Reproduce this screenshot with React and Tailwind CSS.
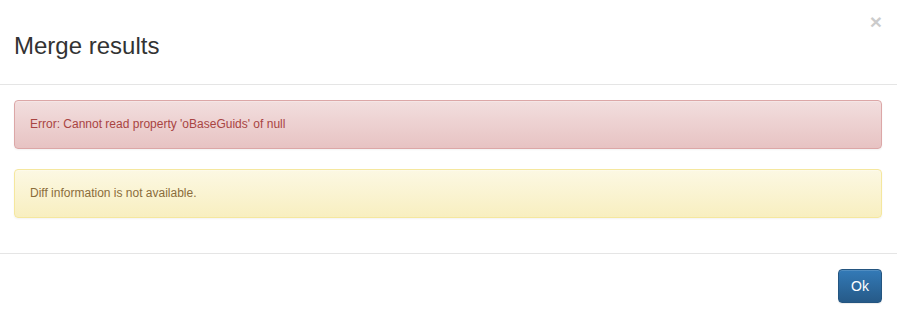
import React from 'react';

const App = () => {
    return (
        <div className="w-[897px] h-[315px] bg-white text-[#333] overflow-hidden" style={{ fontFamily: '"Liberation Sans", Arial, sans-serif' }}>
            <div className="relative border-b border-[#e5e5e5] px-[14px] pt-[33px] pb-[25px]">
                <button className="absolute top-[11px] right-[15px] text-[21px] leading-[21px] font-bold text-black opacity-20">
                    ×
                </button>
                <h4 className="text-[24px] leading-[26px] font-normal m-0">Merge results</h4>
            </div>
            <div className="pl-[14px] pr-[15px] pt-[15px] pb-[15px]">
                <div className="mb-[20px] rounded-[4px] border border-[#dca7a7] bg-gradient-to-b from-[#f2dede] to-[#e7c3c3] px-[15px] py-[15px] text-[12px] leading-[17px] text-[#a94442] shadow-[inset_0_1px_0_rgba(255,255,255,0.25),0_1px_2px_rgba(0,0,0,0.05)]">
                    Error: Cannot read property 'oBaseGuids' of null
                </div>
                <div className="mb-[20px] rounded-[4px] border border-[#f5e79e] bg-gradient-to-b from-[#fcf8e3] to-[#f8efc0] px-[15px] py-[15px] text-[12px] leading-[17px] text-[#8a6d3b] shadow-[inset_0_1px_0_rgba(255,255,255,0.25),0_1px_2px_rgba(0,0,0,0.05)]">
                    Diff information is not available.
                </div>
            </div>
            <div className="flex justify-end border-t border-[#e5e5e5] px-[15px] pt-[15px]">
                <button className="h-[34px] rounded-[4px] border border-[#245580] bg-gradient-to-b from-[#337ab7] to-[#265a88] px-[12px] text-[14px] text-white shadow-[inset_0_1px_0_rgba(255,255,255,0.15),0_1px_1px_rgba(0,0,0,0.075)]">
                    Ok
                </button>
            </div>
        </div>
    );
};

export default App;
